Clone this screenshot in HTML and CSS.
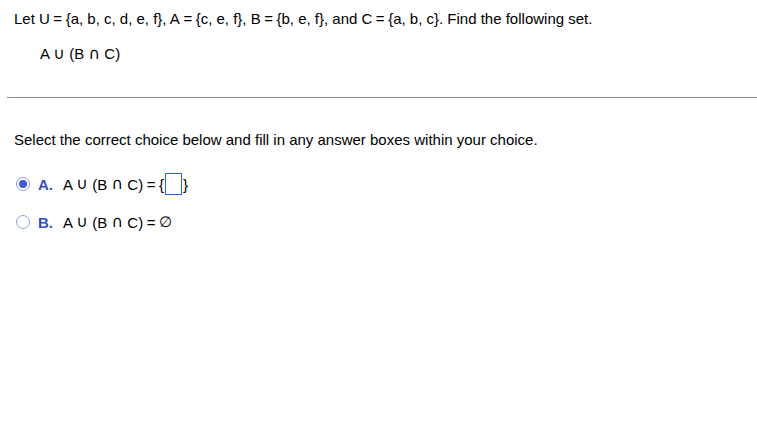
FILE: index.html
```html
<!DOCTYPE html>
<html lang="en">
<head>
    <meta charset="UTF-8">
    <title>Set Question</title>
    <link rel="stylesheet" href="styles.css">
</head>
<body>

<div class="question-box">
    <p class="prompt">Let U<span class="eq">=</span>{a, b, c, d, e, f}, A<span class="eq">=</span>{c, e, f}, B<span class="eq">=</span>{b, e, f}, and C<span class="eq">=</span>{a, b, c}. Find the following set.</p>
    <p class="expr">A <span class="op">∪</span> (B <span class="op">∩</span> C)</p>
</div>

<hr class="divider">

<div class="answer-box">
    <p class="instructions">Select the correct choice below and fill in any answer boxes within your choice.</p>

    <ul class="choices">
        <li class="choice">
            <span class="radio checked"></span>
            <span class="label">A.</span>
            <span class="math">A <span class="op">∪</span> (B <span class="op">∩</span> C)<span class="eq">=</span>{<span class="input-box"></span>}</span>
        </li>
        <li class="choice">
            <span class="radio"></span>
            <span class="label">B.</span>
            <span class="math">A <span class="op">∪</span> (B <span class="op">∩</span> C)<span class="eq">=</span>∅</span>
        </li>
    </ul>
</div>

</body>
</html>
```

FILE: styles.css
```css
body {
    font-family: 'Liberation Sans', Arial, sans-serif;
    font-size: 15px;
    margin: 0;
    padding: 0;
    background-color: #fff;
    color: #000;
}

p {
    margin: 0;
}

.eq {
    margin: 0 3.5px;
}

.op {
    font-family: 'DejaVu Sans', sans-serif;
    font-size: 16px;
    line-height: 1;
}

.question-box {
    padding: 10px 14px 0;
}

.prompt {
    line-height: 17px;
}

.expr {
    margin-top: 18px;
    padding-left: 26px;
    line-height: 17px;
}

.divider {
    border: none;
    border-top: 1px solid #838a99;
    margin: 35px 0 0 7px;
    height: 0;
}

.answer-box {
    padding: 33px 14px 0;
}

.instructions {
    line-height: 17px;
}

.choices {
    list-style: none;
    margin: 24px 0 0;
    padding: 0;
}

.choice {
    display: flex;
    align-items: center;
    height: 24px;
    margin-bottom: 14px;
}

.radio {
    width: 12px;
    height: 12px;
    border: 1px solid #8ea3d6;
    border-radius: 50%;
    margin-left: 2px;
    margin-right: 8px;
    position: relative;
    box-sizing: content-box;
}

.radio.checked::after {
    content: '';
    position: absolute;
    left: 2px;
    top: 2px;
    width: 8px;
    height: 8px;
    border-radius: 50%;
    background-color: #3d5ed6;
}

.label {
    color: #2f4fc0;
    font-weight: bold;
    width: 25px;
}

.math {
    display: flex;
    align-items: center;
    white-space: pre;
}

.input-box {
    display: inline-block;
    width: 15px;
    height: 20px;
    border: 1px solid #2d62cc;
    margin: 0 1px;
}
```
